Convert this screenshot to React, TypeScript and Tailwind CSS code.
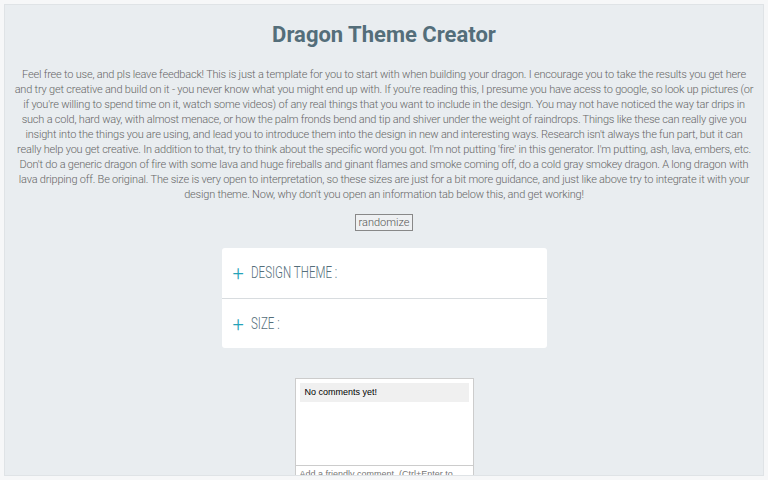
import React from 'react';

const intro =
  "Feel free to use, and pls leave feedback! This is just a template for you to start with when building your dragon. I encourage you to take the results you get here and try get creative and build on it - you never know what you might end up with. If you're reading this, I presume you have acess to google, so look up pictures (or if you're willing to spend time on it, watch some videos) of any real things that you want to include in the design. You may not have noticed the way tar drips in such a cold, hard way, with almost menace, or how the palm fronds bend and tip and shiver under the weight of raindrops. Things like these can really give you insight into the things you are using, and lead you to introduce them into the design in new and interesting ways. Research isn't always the fun part, but it can really help you get creative. In addition to that, try to think about the specific word you got. I'm not putting 'fire' in this generator. I'm putting, ash, lava, embers, etc. Don't do a generic dragon of fire with some lava and huge fireballs and ginant flames and smoke coming off, do a cold gray smokey dragon. A long dragon with lava dripping off. Be original. The size is very open to interpretation, so these sizes are just for a bit more guidance, and just like above try to integrate it with your design theme. Now, why don't you open an information tab below this, and get working!";

const sections = ['DESIGN THEME :', 'SIZE :'];

const App: React.FC = () => {
  return (
    <div className="h-[480px] overflow-hidden bg-[#f6f7f8] p-1">
      <div
        className="h-[472px] overflow-hidden border border-[#dfe3e6] bg-[#e9edf0] px-[8px] pt-[16px]"
        style={{ fontFamily: 'Roboto, sans-serif' }}
      >
        {/* Header */}
        <h1 className="text-center text-[22px] font-bold leading-[28px] text-[#546e7a]">
          Dragon Theme Creator
        </h1>

        <p className="mt-[18px] text-center text-[11px] font-light leading-[15px] tracking-[-0.2px] text-[#666]">
          {intro}
        </p>

        <div className="mt-[12px] flex justify-center">
          <button className="h-[17px] border border-[#888] bg-[#eef0f2] px-[3px] text-[11px] font-light leading-[15px] text-[#555]">
            randomize
          </button>
        </div>

        {/* Accordion */}
        <div className="mx-auto mt-[17px] w-[325px] rounded-[3px] bg-white">
          {sections.map((s, i) => (
            <div
              key={s}
              className={`flex h-[50px] items-center px-[11px] ${i > 0 ? 'border-t border-[#d8dcdf]' : ''}`}
            >
              <span className="w-[18px] text-[20px] font-light leading-none text-[#26a3b8]">+</span>
              <span className="inline-block origin-left scale-x-[0.68] whitespace-nowrap text-[17px] font-light text-[#546e7a]">
                {s}
              </span>
            </div>
          ))}
        </div>

        {/* Comments */}
        <div
          className="mx-auto mt-[30px] w-[179px] border border-[#ccc] bg-white"
          style={{ fontFamily: '"Liberation Sans", Arial, sans-serif' }}
        >
          <div className="h-[86px] p-[4px]">
            <div className="bg-[#f0f0f0] px-[5px] py-[3px] text-[9px] leading-[13px] text-black">
              No comments yet!
            </div>
          </div>
          <div className="border-t border-[#ccc] px-[4px] pt-[2px] text-[9px] text-[#777]">
            Add a friendly comment. (Ctrl+Enter to submit)
          </div>
        </div>
      </div>
    </div>
  );
};

export default App;
